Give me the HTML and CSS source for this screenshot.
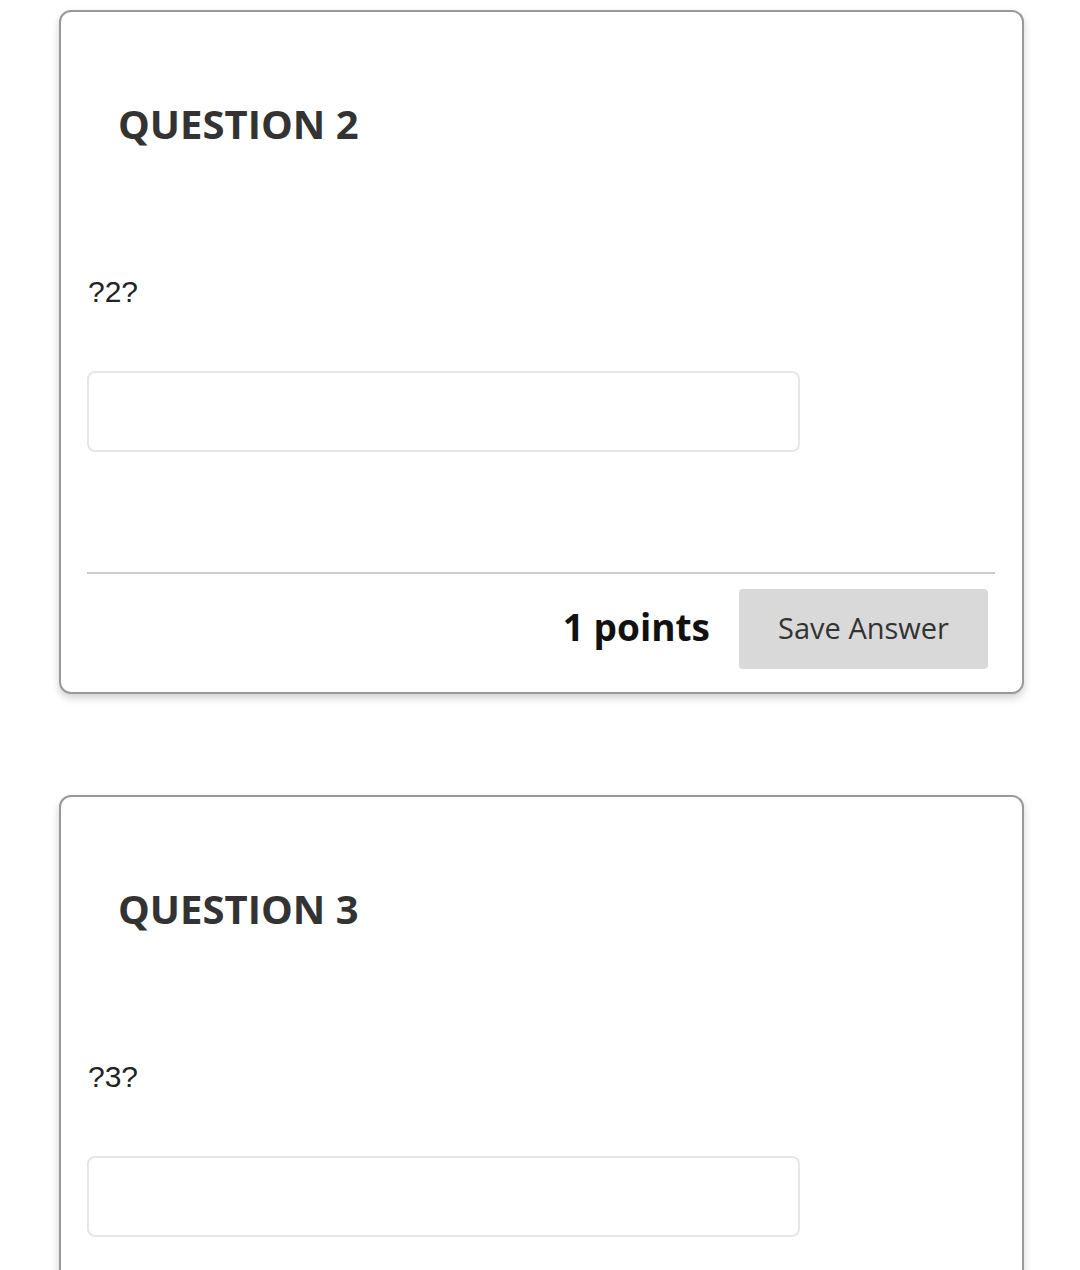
FILE: index.html
```html
<!DOCTYPE html>
<html>
<head>
<meta charset="utf-8">
<link rel="stylesheet" href="styles.css">
</head>
<body>
<div class="page">
  <div class="card">
    <h2 class="q-title">QUESTION 2</h2>
    <p class="q-text">?2?</p>
    <div class="answer"></div>
    <div class="divider"></div>
    <div class="footer">
      <span class="points">1 points</span>
      <button class="save">Save Answer</button>
    </div>
  </div>
  <div class="card">
    <h2 class="q-title">QUESTION 3</h2>
    <p class="q-text">?3?</p>
    <div class="answer"></div>
    <div class="divider"></div>
    <div class="footer">
      <span class="points">1 points</span>
      <button class="save">Save Answer</button>
    </div>
  </div>
</div>
</body>
</html>
```
FILE: styles.css
```css
html, body {
  margin: 0;
  padding: 0;
  background: #fff;
}
.page {
  padding: 10px 0 0 59px;
  display: flex;
  flex-direction: column;
  gap: 101px;
}
.card {
  box-sizing: border-box;
  width: 965px;
  border: 2px solid #999;
  border-radius: 12px;
  background: #fff;
  box-shadow: 0 4px 8px rgba(0,0,0,0.18);
  padding: 0 27px 23px 26px;
}
.q-title {
  margin: 87px 0 0 0;
  padding-left: 31px;
  font-family: "Open Sans", sans-serif;
  font-weight: 700;
  font-size: 40px;
  line-height: 49px;
  color: #333;
}
.q-text {
  margin: 126px 0 0 1px;
  font-family: "Liberation Sans", Arial, sans-serif;
  font-size: 30px;
  line-height: 36px;
  color: #222;
}
.answer {
  box-sizing: border-box;
  margin-top: 61px;
  width: 713px;
  height: 81px;
  border: 2px solid #e6e6e6;
  border-radius: 8px;
}
.divider {
  margin-top: 120px;
  height: 2px;
  background: #ccc;
}
.footer {
  margin-top: 15px;
  display: flex;
  justify-content: flex-end;
  align-items: center;
  gap: 29px;
  padding-right: 7px;
}
.points {
  font-family: "Open Sans", sans-serif;
  font-weight: 700;
  font-size: 37px;
  line-height: 50px;
  margin-bottom: 5px;
  color: #111;
}
.save {
  width: 249px;
  height: 80px;
  border: none;
  border-radius: 4px;
  background: #d9d9d9;
  font-family: "Open Sans", sans-serif;
  font-size: 29px;
  color: #333;
  padding: 0 0 3px 0;
}
```
